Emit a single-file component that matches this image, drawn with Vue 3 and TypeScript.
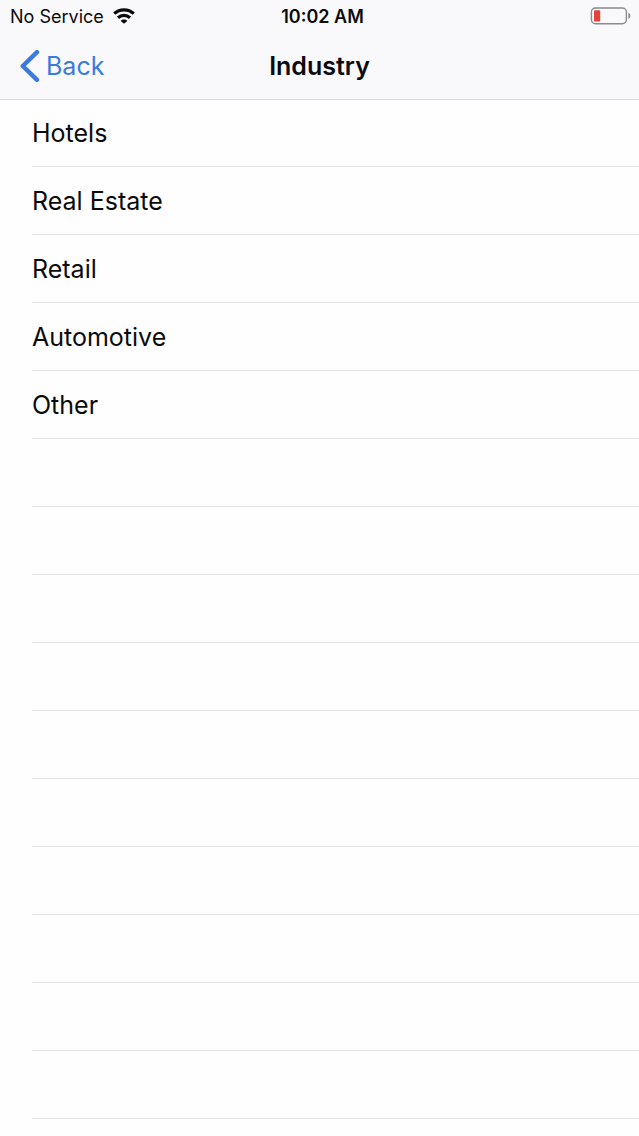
<script setup lang="ts">
import { ref } from 'vue'

const industries: string[] = ['Hotels', 'Real Estate', 'Retail', 'Automotive', 'Other']
const emptyRows = 10
const selected = ref<string | null>(null)
</script>

<template>
  <div class="screen">
    <header class="top">
      <div class="status">
        <div class="carrier">
          <span>No Service</span>
          <svg class="wifi" viewBox="0 0 22 16" aria-hidden="true">
            <path d="M1.2 5.6C6.7.5 15.3.5 20.8 5.6" />
            <path d="M5 9.7c3.4-3.1 8.6-3.1 12 0" />
            <path class="dot" d="M11 15.8 7.7 12.9c1.7-1.8 4.9-1.8 6.6 0z" />
          </svg>
        </div>
        <time class="clock">10:02 AM</time>
        <svg class="battery" viewBox="0 0 41 18" aria-label="Battery low" role="img">
          <rect class="shell" x="1.4" y="1" width="35" height="15.8" rx="4" />
          <rect class="charge" x="4" y="3.2" width="6.2" height="11.4" rx="1.2" />
          <path class="tip" d="M38.4 5.8c2.6.8 2.6 5.4 0 6.2z" />
        </svg>
      </div>
      <nav class="bar">
        <button type="button" class="back">
          <svg class="chevron" viewBox="0 0 20 32" aria-hidden="true">
            <path d="M17 2.2 2.8 16 17 29.8" />
          </svg>
          <span>Back</span>
        </button>
        <h1 class="title">Industry</h1>
      </nav>
    </header>
    <ul class="list">
      <li v-for="name in industries" :key="name" class="row">
        <button type="button" class="option" :aria-pressed="selected === name" @click="selected = name">
          {{ name }}
        </button>
      </li>
      <li v-for="n in emptyRows" :key="n" class="row" aria-hidden="true"></li>
    </ul>
  </div>
</template>

<style>
body {
  margin: 0;
  background: #fefefe;
}
</style>

<style scoped>
.screen {
  min-height: 100vh;
  background: #fefefe;
  color: #0b0b0d;
  font-family: Inter, "Liberation Sans", sans-serif;
}

.top {
  background: #f9f8fb;
  box-shadow: 0 1px 0 #d9d9db;
}

.status {
  display: grid;
  grid-template-columns: 1fr auto 1fr;
  align-items: center;
  height: 32px;
  padding: 0 8px 0 10px;
  font-size: 18px;
}

.carrier {
  display: flex;
  align-items: center;
  gap: 9px;
}

.wifi {
  width: 22px;
  height: 16px;
  fill: none;
  stroke: #0b0b0d;
  stroke-width: 3.2;
}

.wifi .dot {
  fill: #0b0b0d;
  stroke: none;
}

.clock {
  padding-left: 4px;
  font-weight: 600;
}

.battery {
  justify-self: end;
  width: 41px;
  height: 18px;
}

.shell {
  fill: none;
  stroke: #8b8a8d;
  stroke-width: 1.4;
}

.charge {
  fill: #e2433b;
}

.tip {
  fill: #8b8a8d;
}

.bar {
  display: grid;
  grid-template-columns: 1fr auto 1fr;
  align-items: center;
  height: 67px;
  padding: 0 20px;
}

.back {
  display: flex;
  align-items: center;
  gap: 6px;
  justify-self: start;
  padding: 0;
  border: 0;
  background: none;
  color: #3b7ade;
  font: inherit;
  font-size: 25px;
  line-height: 32px;
  cursor: pointer;
}

.chevron {
  width: 20px;
  height: 32px;
  fill: none;
  stroke: currentColor;
  stroke-width: 4.4;
  stroke-linecap: round;
  stroke-linejoin: round;
}

.title {
  margin: 0;
  font-size: 25px;
  font-weight: 600;
  line-height: 32px;
}

.list {
  margin: 0;
  padding: 0 0 0 32px;
  list-style: none;
}

.row {
  box-sizing: border-box;
  height: 68px;
  border-bottom: 1px solid #e3e3e5;
}

.option {
  width: 100%;
  height: 100%;
  padding: 0;
  border: 0;
  background: none;
  color: inherit;
  font: inherit;
  font-size: 25px;
  line-height: 32px;
  text-align: left;
  cursor: pointer;
}
</style>
